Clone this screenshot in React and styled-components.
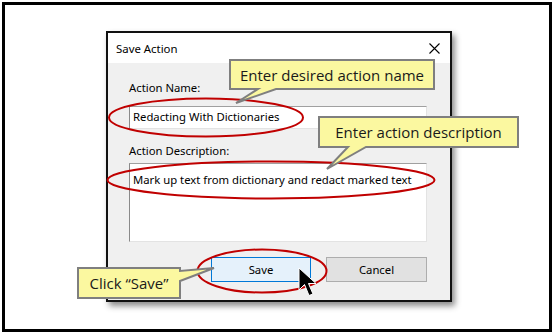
import React from "react";
import styled, { createGlobalStyle } from "styled-components";

const GlobalStyle = createGlobalStyle`
  html, body { margin: 0; padding: 0; background: #ffffff; }
  * { box-sizing: border-box; }
`;

const Page = styled.div`
  position: relative;
  width: 558px;
  height: 335px;
  padding: 2px 0 0 2px;
  font-family: "Noto Sans", "Open Sans", sans-serif;
`;

const Frame = styled.div`
  width: 550px;
  height: 330px;
  border: 3px solid #000;
  padding: 26px 0 0 101px;
`;

const Dialog = styled.div`
  width: 346px;
  height: 271px;
  border: 2px solid #111;
  display: flex;
  flex-direction: column;
  box-shadow: 3px 4px 6px rgba(0, 0, 0, 0.45);
`;

const TitleBar = styled.div`
  height: 30px;
  background: #fff;
  display: flex;
  align-items: center;
  justify-content: space-between;
  padding: 0 10px 0 8px;
`;

const Title = styled.span`
  font-size: 11.4px;
  color: #000;
`;

const Body = styled.div`
  flex: 1;
  background: #f0f0f0;
  padding: 17px 23px 0 21px;
  display: flex;
  flex-direction: column;
`;

const Label = styled.div`
  font-size: 11.3px;
  line-height: 16px;
  color: #000;
  margin-top: ${(p) => p.$top || 0}px;
`;

const Field = styled.div`
  height: ${(p) => p.$h}px;
  margin-top: ${(p) => p.$top}px;
  background: #fff;
  border: 1px solid;
  border-color: #a0a0a0 #e3e3e3 #e3e3e3 #8a8a8a;
  padding: ${(p) => p.$padTop}px 3px 0 3px;
  font-size: 11.3px;
  line-height: 16px;
  color: #000;
  white-space: nowrap;
`;

const ButtonRow = styled.div`
  margin-top: 15px;
  display: flex;
  justify-content: flex-end;
  gap: 15px;
`;

const Button = styled.div`
  width: ${(p) => p.$w}px;
  height: 25px;
  display: flex;
  align-items: center;
  justify-content: center;
  font-size: 11.3px;
  color: #000;
  background: ${(p) => (p.$primary ? "#e5f1fb" : "#e1e1e1")};
  border: 1px solid ${(p) => (p.$primary ? "#0078d7" : "#adadad")};
`;

const Overlay = styled.svg`
  position: absolute;
  left: 0;
  top: 0;
  pointer-events: none;
`;

const CalloutText = styled.div`
  position: absolute;
  display: flex;
  align-items: center;
  justify-content: center;
  font-family: "Open Sans", "Noto Sans", sans-serif;
  font-size: 15px;
  color: #1a1a1a;
  white-space: nowrap;
  pointer-events: none;
`;

const CloseIcon = () => (
  <svg width="11" height="11" viewBox="0 0 11 11">
    <path d="M0.5 0.5 L10.5 10.5 M10.5 0.5 L0.5 10.5" stroke="#000" strokeWidth="1.1" fill="none" />
  </svg>
);

const callouts = [
  {
    d: "M230 60 H434 V89 H276 L236 103 L258 89 H230 Z",
    box: { left: 229, top: 59, width: 206, height: 31 },
    text: "Enter desired action name",
  },
  {
    d: "M319 117 H518 V147 H366 L327 169 L348 147 H319 Z",
    box: { left: 318, top: 116, width: 201, height: 32 },
    text: "Enter action description",
  },
  {
    d: "M78 268 H180 V271 L214 268 L180 281 V298 H78 Z",
    box: { left: 77, top: 267, width: 104, height: 32 },
    text: "Click \u201cSave\u201d",
  },
];

export default function App() {
  return (
    <>
      <GlobalStyle />
      <Page>
        <Frame>
          <Dialog>
            <TitleBar>
              <Title>Save Action</Title>
              <CloseIcon />
            </TitleBar>
            <Body>
              <Label>Action Name:</Label>
              <Field $h={23} $top={10} $padTop={2}>Redacting With Dictionaries</Field>
              <Label $top={14}>Action Description:</Label>
              <Field $h={79} $top={4} $padTop={8}>Mark up text from dictionary and redact marked text</Field>
              <ButtonRow>
                <Button $w={100} $primary>Save</Button>
                <Button $w={101}>Cancel</Button>
              </ButtonRow>
            </Body>
          </Dialog>
        </Frame>

        <Overlay width="558" height="335" viewBox="0 0 558 335">
          <g fill="none" stroke="#c00000" strokeWidth="2">
            <ellipse cx="206" cy="117.5" rx="97" ry="19" />
            <ellipse cx="271" cy="180" rx="163.5" ry="18.5" />
            <ellipse cx="262" cy="271" rx="64.5" ry="21.5" />
          </g>
          {callouts.map((c, i) => (
            <path key={i} d={c.d} fill="#fbf8a0" stroke="#7f7f7f" strokeWidth="2" strokeLinejoin="miter" />
          ))}
          <path
            d="M299 268 L299 290 L304.5 284.5 L309 295.5 L313 294 L308.5 283.5 L316 283.5 Z"
            fill="#000"
            stroke="#fff"
            strokeWidth="1"
            strokeLinejoin="miter"
          />
        </Overlay>
        {callouts.map((c, i) => (
          <CalloutText key={i} style={c.box}>{c.text}</CalloutText>
        ))}
      </Page>
    </>
  );
}
